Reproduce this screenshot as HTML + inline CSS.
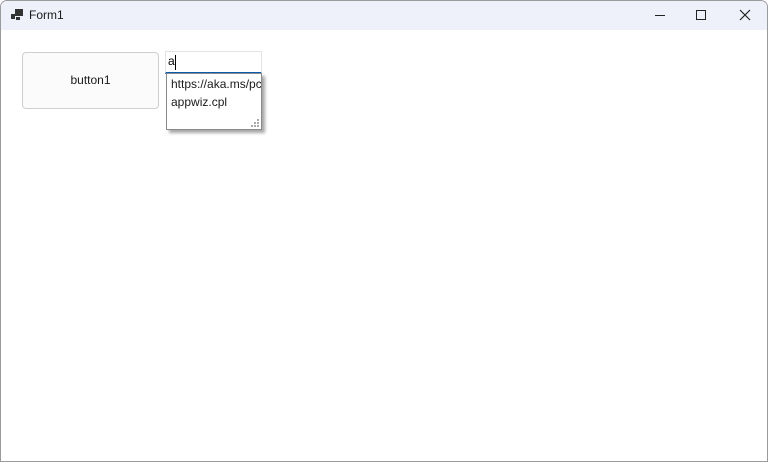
<!DOCTYPE html>
<html><head><style>
body{margin:0;width:768px;height:462px;overflow:hidden;background:#fff;font-family:"Segoe UI","Liberation Sans",sans-serif;}
.win{position:absolute;left:0;top:0;width:766px;height:460px;border:1px solid #9a9a9a;border-radius:7px 7px 0 0;background:#fff;overflow:hidden}
.title{position:absolute;left:0;top:0;width:766px;height:29px;background:#eef1f9;}
.title span{position:absolute;left:28px;top:7px;font-size:12px;color:#1a1a1a}
.btn{position:absolute;left:21px;top:51px;width:135px;height:55px;border:1px solid #cfcfcf;border-radius:4px;background:#fbfbfb;font-size:12px;text-align:center;line-height:55px;color:#1a1a1a}
.tb{position:absolute;left:164px;top:50px;width:95px;height:20px;border:1px solid #e3e3e3;border-bottom:2px solid #0a5cb0;background:#fff;font-size:12px}
.dd{position:absolute;left:165px;top:72px;width:94px;height:55px;border:1px solid #8a8a8a;background:#fff;box-shadow:3px 3px 3px rgba(0,0,0,.35);font-size:12px;color:#1a1a1a;overflow:hidden;white-space:nowrap}
</style></head><body>
<div class="win">
<div class="title">
<svg style="position:absolute;left:10px;top:8px" width="12" height="12"><rect x="4" y="0" width="8" height="7" fill="#333"/><rect x="0" y="5" width="4" height="5" fill="#333"/><rect x="5" y="8" width="4" height="3" fill="#333"/></svg>
<span>Form1</span>
<svg style="position:absolute;left:649px;top:8px" width="110" height="14">
<line x1="5" y1="6.5" x2="15" y2="6.5" stroke="#222" stroke-width="1"/>
<rect x="46.5" y="1.5" width="9" height="9" fill="none" stroke="#222"/>
<path d="M90 1 L100 11 M100 1 L90 11" stroke="#222" stroke-width="1.2"/>
</svg>
</div>
<div class="btn">button1</div>
<div class="tb"><span style="position:absolute;left:2px;top:2px">a</span><span style="position:absolute;left:9px;top:3px;width:1px;height:15px;background:#000"></span></div>
<div class="dd"><div style="position:absolute;left:4px;top:3px">https://aka.ms/pc</div><div style="position:absolute;left:4px;top:21px">appwiz.cpl</div>
<svg style="position:absolute;right:1px;bottom:1px" width="10" height="10"><g fill="#aaa"><rect x="7" y="1" width="2" height="2"/><rect x="4" y="4" width="2" height="2"/><rect x="7" y="4" width="2" height="2"/><rect x="1" y="7" width="2" height="2"/><rect x="4" y="7" width="2" height="2"/><rect x="7" y="7" width="2" height="2"/></g></svg>
</div>
</div>
</body></html>
